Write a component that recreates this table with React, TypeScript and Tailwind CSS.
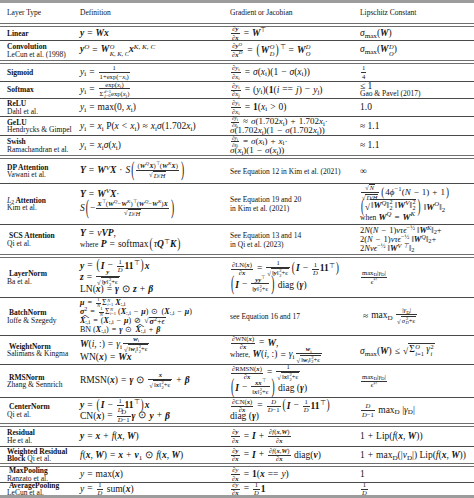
import React from "react";

type N = { children?: React.ReactNode };

// math bits
const V = ({ children }: N) => <b className="font-bold italic">{children}</b>;
const M = ({ children }: N) => <i>{children}</i>;
const Eq = ({ children = "=" }: N) => <span className="mx-[3px]">{children}</span>;

function Fr({ n, d, sm }: { n: React.ReactNode; d: React.ReactNode; sm?: boolean }) {
  return (
    <span
      className={`mx-[1px] inline-flex flex-col items-center align-middle ${
        sm ? "text-[0.58em] leading-[0.9]" : "text-[0.7em] leading-[0.95]"
      }`}
    >
      <span className="px-[1px] pb-[0.5px]">{n}</span>
      <span className="self-stretch border-t border-[#333] px-[1px] pt-[0.5px] text-center">{d}</span>
    </span>
  );
}

const Pd = ({ n, d, sm }: { n: React.ReactNode; d: React.ReactNode; sm?: boolean }) => (
  <Fr sm={sm} n={<>∂{n}</>} d={<>∂{d}</>} />
);

const SS = ({ t, b, sm }: { t: React.ReactNode; b: React.ReactNode; sm?: boolean }) => (
  <span
    className={`ml-[0.5px] inline-flex flex-col align-middle ${
      sm ? "text-[0.55em] leading-[0.85]" : "text-[0.68em] leading-[0.95]"
    }`}
  >
    <span>{t}</span>
    <span>{b}</span>
  </span>
);

const Sq = ({ children, sm }: N & { sm?: boolean }) => (
  <span className="inline-flex items-end">
    <span className="leading-none">√</span>
    <span className={`border-t border-[#333] px-[1px] ${sm ? "leading-[0.9]" : "leading-[1.05]"}`}>{children}</span>
  </span>
);

const Lp = ({ tall }: { tall?: boolean }) => (
  <span className={`mx-[1px] inline-block ${tall ? "scale-y-[2.2]" : "scale-y-[1.5]"}`}>(</span>
);
const Rp = ({ tall }: { tall?: boolean }) => (
  <span className={`mx-[1px] inline-block ${tall ? "scale-y-[2.2]" : "scale-y-[1.5]"}`}>)</span>
);

// one line of a stacked formula, fixed height, content centred (may overflow like the paper)
const Ln = ({ h = "h-[9px]", children }: { h?: string; children?: React.ReactNode }) => (
  <div className={`flex items-center ${h}`}>
    <span className="whitespace-nowrap">{children}</span>
  </div>
);

const Xi = () => (
  <>
    <V>X</V>
    <sub>:,i</sub>
  </>
);
const Hat = () => (
  <span className="relative inline-block">
    <span className="absolute -top-[3px] left-0 right-0 scale-x-[3] text-center text-[0.8em] leading-none">^</span>
    <Xi />
  </span>
);
const Norm2 = ({ v }: { v: React.ReactNode }) => (
  <>
    ‖{v}‖<SS t="2" b="2" />
  </>
);
const IMinus = () => (
  <>
    <Lp />
    <V>I</V>
    <Eq>−</Eq>
    <Fr n="1" d={<M>D</M>} />
    <b>11</b>
    <sup>⊤</sup>
    <Rp />
  </>
);
const Sup = ({ c }: { c: string }) => (
  <sup>
    <M>{c}</M>
  </sup>
);
const Wq = ({ c }: { c: string }) => (
  <>
    <V>W</V>
    <Sup c={c} />
  </>
);
const T = ({ children }: N) => <span className="text-[7.5px]">{children}</span>;

type Row = {
  name: React.ReactNode;
  by?: React.ReactNode;
  ind?: boolean;
  def: React.ReactNode;
  grad: React.ReactNode;
  lip: React.ReactNode;
  h: string;
  rule: "s" | "d" | "e";
  dc?: string;
  gc?: string;
  lc?: string;
};

const yi = (
  <>
    <M>y</M>
    <sub>i</sub>
  </>
);
const xi = (
  <>
    <M>x</M>
    <sub>i</sub>
  </>
);
const sqYe = (v: React.ReactNode) => (
  <Sq>
    <Norm2 v={v} />+<M>ϵ</M>
  </Sq>
);
const wi = (
  <>
    <V>w</V>
    <sub>i</sub>
  </>
);
const sumN = <SS sm t={<M>N</M>} b={<><M>i</M>=1</>} />;

const rows: Row[] = [
  {
    name: "Linear",
    def: (
      <>
        <V>y</V>
        <Eq />
        <V>W</V>
        <V>x</V>
      </>
    ),
    grad: (
      <>
        <Pd n={<V>y</V>} d={<V>x</V>} />
        <Eq />
        <V>W</V>
        <sup>⊤</sup>
      </>
    ),
    lip: (
      <>
        <M>σ</M>
        <sub>max</sub>(<V>W</V>)
      </>
    ),
    h: "h-[14px]",
    rule: "s",
  },
  {
    name: "Convolution",
    by: "LeCun et al. (1998)",
    def: (
      <>
        <V>y</V>
        <Sup c="O" />
        <Eq />
        <V>W</V>
        <SS t={<M>O</M>} b={<M>K, K, C</M>} />
        <V>x</V>
        <Sup c="K, K, C" />
      </>
    ),
    grad: (
      <>
        <Pd
          n={
            <>
              <V>y</V>
              <Sup c="O" />
            </>
          }
          d={
            <>
              <V>x</V>
              <Sup c="D" />
            </>
          }
        />
        <Eq />
        <Lp />
        <V>W</V>
        <SS t={<M>O</M>} b={<M>D</M>} />
        <Rp />
        <sup>⊤</sup>
        <Eq />
        <V>W</V>
        <SS t={<M>D</M>} b={<M>O</M>} />
      </>
    ),
    lip: (
      <>
        <M>σ</M>
        <sub>max</sub>(<V>W</V>
        <SS t={<M>D</M>} b={<M>O</M>} />)
      </>
    ),
    h: "h-[23px]",
    rule: "d",
  },
  {
    name: "Sigmoid",
    def: (
      <>
        {yi}
        <Eq />
        <Fr
          n="1"
          d={
            <>
              1+exp(−<M>x</M>
              <sub>i</sub>)
            </>
          }
        />
      </>
    ),
    grad: (
      <>
        <Pd n={yi} d={xi} />
        <Eq />
        <M>σ</M>({xi})(1<Eq>−</Eq>
        <M>σ</M>({xi}))
      </>
    ),
    lip: <Fr n="1" d="4" />,
    h: "h-[18px]",
    rule: "s",
  },
  {
    name: "Softmax",
    def: (
      <>
        {yi}
        <Eq />
        <Fr
          n={<>exp({xi})</>}
          d={
            <>
              Σ<SS t={<><M>d</M>−1</>} b={<><M>j</M>=0</>} />
              exp(<M>x</M>
              <sub>j</sub>)
            </>
          }
        />
      </>
    ),
    grad: (
      <>
        <Pd
          n={yi}
          d={
            <>
              <M>x</M>
              <sub>j</sub>
            </>
          }
        />
        <Eq />({yi})(<b>1</b>(<M>i</M>
        <Eq>==</Eq>
        <M>j</M>)<Eq>−</Eq>
        <M>y</M>
        <sub>j</sub>)
      </>
    ),
    lip: (
      <div className="flex flex-col leading-[8px]">
        <span>≤ 1</span>
        <T>Gao &amp; Pavel (2017)</T>
      </div>
    ),
    h: "h-[17px]",
    rule: "s",
  },
  {
    name: "ReLU",
    by: "Dahl et al.",
    def: (
      <>
        {yi}
        <Eq />
        max(0, {xi})
      </>
    ),
    grad: (
      <>
        <Pd n={yi} d={xi} />
        <Eq />
        <b>1</b>({xi}
        <Eq>&gt;</Eq>0)
      </>
    ),
    lip: "1.0",
    h: "h-[18px]",
    rule: "s",
  },
  {
    name: "GeLU",
    by: "Hendrycks & Gimpel",
    def: (
      <>
        {yi}
        <Eq />
        {xi} P(<M>x</M>
        <Eq>&lt;</Eq>
        {xi})<Eq>≈</Eq>
        {xi}
        <M>σ</M>(1.702{xi})
      </>
    ),
    grad: (
      <div>
        <Ln h="h-[10px]">
          <Pd sm n={yi} d={xi} />
          <Eq>≈</Eq>
          <M>σ</M>(1.702{xi})<Eq>+</Eq>1.702{xi}·
        </Ln>
        <Ln h="h-[8px]">
          <M>σ</M>(1.702{xi})(1<Eq>−</Eq>
          <M>σ</M>(1.702{xi}))
        </Ln>
      </div>
    ),
    gc: "text-[9px]",
    lip: "≈ 1.1",
    h: "h-[19px]",
    rule: "s",
  },
  {
    name: "Swish",
    by: "Ramachandran et al.",
    def: (
      <>
        {yi}
        <Eq />
        {xi}
        <M>σ</M>({xi})
      </>
    ),
    grad: (
      <div>
        <Ln h="h-[11px]">
          <Pd sm n={yi} d={xi} />
          <Eq />
          <M>σ</M>({xi})<Eq>+</Eq>
          {xi}·
        </Ln>
        <Ln h="h-[8px]">
          <M>σ</M>({xi})(1<Eq>−</Eq>
          <M>σ</M>({xi}))
        </Ln>
      </div>
    ),
    gc: "text-[9px]",
    lip: "≈ 1.1",
    h: "h-[23px]",
    rule: "d",
  },
  {
    name: "DP Attention",
    by: "Vawani et al.",
    def: (
      <>
        <V>Y</V>
        <Eq />
        <Wq c="V" />
        <V>X</V>
        <Eq>·</Eq>
        <M>S</M>
        <Lp tall />
        <Fr
          n={
            <>
              (<Wq c="Q" />
              <V>X</V>)<sup>⊤</sup>(<Wq c="K" />
              <V>X</V>)
            </>
          }
          d={
            <Sq>
              <M>D</M>/<M>H</M>
            </Sq>
          }
        />
        <Rp tall />
      </>
    ),
    grad: <T>See Equation 12 in Kim et al. (2021)</T>,
    lip: "∞",
    h: "h-[25px]",
    rule: "s",
  },
  {
    name: (
      <>
        <i className="font-normal">L</i>
        <sub className="font-normal">2</sub> Attention
      </>
    ),
    by: "Kim et al.",
    def: (
      <div>
        <Ln h="h-[10px]">
          <V>Y</V>
          <Eq />
          <Wq c="V" />
          <V>X</V>·
        </Ln>
        <Ln h="h-[20px]">
          <M>S</M>
          <Lp tall />−
          <Fr
            n={
              <>
                <V>X</V>
                <sup>⊤</sup>(<Wq c="Q" />−<Wq c="K" />)<sup>⊤</sup>(<Wq c="Q" />−<Wq c="K" />)<V>X</V>
              </>
            }
            d={
              <Sq>
                <M>D</M>/<M>H</M>
              </Sq>
            }
          />
          <Rp tall />
        </Ln>
      </div>
    ),
    grad: (
      <div className="flex flex-col leading-[9px]">
        <T>See Equation 19 and 20</T>
        <T>in Kim et al. (2021)</T>
      </div>
    ),
    lip: (
      <div>
        <Ln h="h-[13px]">
          <Fr
            n={
              <Sq>
                <M>N</M>
              </Sq>
            }
            d={
              <Sq>
                <M>D</M>/<M>H</M>
              </Sq>
            }
          />
          <Lp />4<M>ϕ</M>
          <sup>−1</sup>(<M>N</M>
          <Eq>−</Eq>1)<Eq>+</Eq>1<Rp />
        </Ln>
        <Ln h="h-[14px]">
          <Lp tall />
          <Sq>
            <Norm2 v={<Wq c="Q" />} /> <Norm2 v={<Wq c="V" />} />
          </Sq>
          <Rp tall /> ‖<Wq c="O" />‖<sub>2</sub>
        </Ln>
        <Ln>
          <T>when</T> <Wq c="Q" />
          <Eq />
          <Wq c="K" />
        </Ln>
      </div>
    ),
    lc: "text-[9px]",
    h: "h-[41px]",
    rule: "s",
  },
  {
    name: "SCS Attention",
    by: "Qi et al.",
    ind: true,
    def: (
      <div>
        <Ln h="h-[10px]">
          <V>Y</V>
          <Eq />
          <M>ν</M>
          <V>V</V>
          <V>P</V>,
        </Ln>
        <Ln h="h-[13px]">
          <T>where</T> <V>P</V>
          <Eq />
          softmax
          <Lp />
          <M>τ</M>
          <V>Q</V>
          <sup>⊤</sup>
          <V>K</V>
          <Rp />
        </Ln>
      </div>
    ),
    grad: (
      <div className="flex flex-col leading-[9px]">
        <T>See Equation 13 and 14</T>
        <T>in Qi et al. (2023)</T>
      </div>
    ),
    lip: (
      <div>
        <Ln>
          2<M>N</M>(<M>N</M>
          <Eq>−</Eq>1)<M>ντϵ</M>
          <sup>−½</sup> ‖<Wq c="K" />‖<sub>2</sub>+
        </Ln>
        <Ln>
          2(<M>N</M>
          <Eq>−</Eq>1)<M>ντϵ</M>
          <sup>−½</sup> ‖<Wq c="Q" />‖<sub>2</sub>+
        </Ln>
        <Ln>
          2<M>Nνϵ</M>
          <sup>−½</sup> ‖<Wq c="V ⊤" />‖<sub>2</sub>
        </Ln>
      </div>
    ),
    lc: "text-[8.5px]",
    h: "h-[33px]",
    rule: "d",
  },
  {
    name: "LayerNorm",
    by: "Ba et al.",
    ind: true,
    def: (
      <div>
        <Ln h="h-[11px]">
          <V>y</V>
          <Eq />
          <IMinus />
          <V>x</V>
        </Ln>
        <Ln h="h-[13px]">
          <V>z</V>
          <Eq />
          <Fr n={<V>y</V>} d={sqYe(<V>y</V>)} />
        </Ln>
        <Ln h="h-[10px]">
          LN(<V>x</V>)<Eq />
          <V>γ</V>
          <Eq>⊙</Eq>
          <V>z</V>
          <Eq>+</Eq>
          <V>β</V>
        </Ln>
      </div>
    ),
    grad: (
      <div>
        <Ln h="h-[15px]">
          <Fr n={<>∂LN(<V>x</V>)</>} d={<>∂<V>x</V></>} />
          <Eq />
          <Fr n="1" d={sqYe(<V>y</V>)} />
          <IMinus />
        </Ln>
        <Ln h="h-[17px]">
          <Lp tall />
          <V>I</V>
          <Eq>−</Eq>
          <Fr
            n={
              <>
                <V>yy</V>
                <sup>⊤</sup>
              </>
            }
            d={
              <>
                <Norm2 v={<V>y</V>} />+<M>ϵ</M>
              </>
            }
          />
          <Rp tall /> diag (<V>γ</V>)
        </Ln>
      </div>
    ),
    lip: (
      <Fr
        n={
          <>
            max<sub>D</sub>|<M>γ</M>
            <sub>D</sub>|
          </>
        }
        d={
          <>
            <M>ϵ</M>
            <sup>½</sup>
          </>
        }
      />
    ),
    h: "h-[40px]",
    rule: "s",
  },
  {
    name: "BatchNorm",
    by: "Ioffe & Szegedy",
    ind: true,
    def: (
      <div>
        <Ln>
          <V>μ</V>
          <Eq />
          <Fr sm n="1" d={<M>N</M>} />Σ{sumN} <Xi />
        </Ln>
        <Ln>
          <V>σ</V>
          <sup>2</sup>
          <Eq />
          <Fr sm n="1" d={<M>N</M>} />Σ{sumN} (<Xi />
          <Eq>−</Eq>
          <V>μ</V>)<Eq>⊙</Eq>(<Xi />
          <Eq>−</Eq>
          <V>μ</V>)
        </Ln>
        <Ln>
          <Hat />
          <Eq />(<Xi />
          <Eq>−</Eq>
          <V>μ</V>)<Eq>⊘</Eq>
          <Sq sm>
            <V>σ</V>
            <sup>2</sup>+<M>ϵ</M>
          </Sq>
        </Ln>
        <Ln>
          BN (<Xi />)<Eq />
          <V>γ</V>
          <Eq>⊙</Eq>
          <Hat />
          <Eq>+</Eq>
          <V>β</V>
        </Ln>
      </div>
    ),
    dc: "text-[8px]",
    grad: <T>see Equation 16 and 17</T>,
    lip: (
      <>
        <Eq>≈</Eq>max<sub>D</sub>{" "}
        <Fr
          n={
            <>
              |<M>γ</M>
              <sub>D</sub>|
            </>
          }
          d={
            <Sq>
              <M>σ</M>
              <SS t="2" b={<M>D</M>} />+<M>ϵ</M>
            </Sq>
          }
        />
      </>
    ),
    h: "h-[38px]",
    rule: "s",
  },
  {
    name: "WeightNorm",
    by: "Salimans & Kingma",
    ind: true,
    def: (
      <div>
        <Ln h="h-[14px]">
          <V>W</V>(<M>i</M>, :)<Eq />
          <M>γ</M>
          <sub>i</sub>
          <Fr n={wi} d={sqYe(wi)} />
        </Ln>
        <Ln h="h-[10px]">
          WN(<V>x</V>)<Eq />
          <V>W</V>
          <V>x</V>
        </Ln>
      </div>
    ),
    grad: (
      <div>
        <Ln h="h-[11px]">
          <Fr n={<>∂WN(<V>x</V>)</>} d={<>∂<V>x</V></>} />
          <Eq />
          <V>W</V>,
        </Ln>
        <Ln h="h-[14px]">
          <T>where,</T> <V>W</V>(<M>i</M>, :)<Eq />
          <M>γ</M>
          <sub>i</sub>
          <Fr n={wi} d={sqYe(wi)} />
        </Ln>
      </div>
    ),
    lip: (
      <>
        <M>σ</M>
        <sub>max</sub>(<V>W</V>)<Eq>≤</Eq>
        <Sq>
          Σ<SS t={<M>O</M>} b={<><M>i</M>=1</>} /> <M>γ</M>
          <SS t="2" b={<M>i</M>} />
        </Sq>
      </>
    ),
    h: "h-[29px]",
    rule: "s",
  },
  {
    name: "RMSNorm",
    by: "Zhang & Sennrich",
    ind: true,
    def: (
      <>
        RMSN(<V>x</V>)<Eq />
        <V>γ</V>
        <Eq>⊙</Eq>
        <Fr n={<V>x</V>} d={sqYe(<V>x</V>)} />
        <Eq>+</Eq>
        <V>β</V>
      </>
    ),
    grad: (
      <div>
        <Ln h="h-[14px]">
          <Fr n={<>∂RMSN(<V>x</V>)</>} d={<>∂<V>x</V></>} />
          <Eq />
          <Fr n="1" d={sqYe(<V>x</V>)} />
        </Ln>
        <Ln h="h-[16px]">
          <Lp tall />
          <V>I</V>
          <Eq>−</Eq>
          <Fr
            n={
              <>
                <V>xx</V>
                <sup>⊤</sup>
              </>
            }
            d={
              <>
                <Norm2 v={<V>x</V>} />+<M>ϵ</M>
              </>
            }
          />
          <Rp tall /> diag (<V>γ</V>)
        </Ln>
      </div>
    ),
    lip: (
      <Fr
        n={
          <>
            max<sub>D</sub>|<M>γ</M>
            <sub>D</sub>|
          </>
        }
        d={
          <>
            <M>ϵ</M>
            <sup>½</sup>
          </>
        }
      />
    ),
    h: "h-[33px]",
    rule: "s",
  },
  {
    name: "CenterNorm",
    by: "Qi et al.",
    ind: true,
    def: (
      <div>
        <Ln h="h-[11px]">
          <V>y</V>
          <Eq />
          <IMinus />
          <V>x</V>
        </Ln>
        <Ln h="h-[10px]">
          CN(<V>x</V>)<Eq />
          <Fr n={<M>D</M>} d={<><M>D</M>−1</>} />
          <V>γ</V>
          <Eq>⊙</Eq>
          <V>y</V>
          <Eq>+</Eq>
          <V>β</V>
        </Ln>
      </div>
    ),
    grad: (
      <div>
        <Ln h="h-[12px]">
          <Fr n={<>∂CN(<V>x</V>)</>} d={<>∂<V>x</V></>} />
          <Eq />
          <Fr n={<M>D</M>} d={<><M>D</M>−1</>} />
          <IMinus />
        </Ln>
        <Ln h="h-[9px]">
          diag (<V>γ</V>)
        </Ln>
      </div>
    ),
    lip: (
      <>
        <Fr n={<M>D</M>} d={<><M>D</M>−1</>} /> max<sub>D</sub> |<M>γ</M>
        <sub>D</sub>|
      </>
    ),
    h: "h-[29px]",
    rule: "d",
  },
  {
    name: "Residual",
    by: "He et al.",
    def: (
      <>
        <V>y</V>
        <Eq />
        <V>x</V>
        <Eq>+</Eq>
        <M>f</M>(<V>x</V>, <V>W</V>)
      </>
    ),
    grad: (
      <>
        <Pd n={<V>y</V>} d={<V>x</V>} />
        <Eq />
        <V>I</V>
        <Eq>+</Eq>
        <Fr n={<>∂<M>f</M>(<V>x</V>,<V>W</V>)</>} d={<>∂<V>x</V></>} />
      </>
    ),
    lip: (
      <>
        1<Eq>+</Eq>Lip(<M>f</M>(<V>x</V>, <V>W</V>))
      </>
    ),
    h: "h-[20px]",
    rule: "s",
  },
  {
    name: "Weighted Residual",
    by: (
      <>
        <b>Block</b> Qi et al.
      </>
    ),
    def: (
      <>
        <M>f</M>(<V>x</V>, <V>W</V>)<Eq />
        <V>x</V>
        <Eq>+</Eq>
        <V>ν</V>
        <sub>1</sub>
        <Eq>⊙</Eq>
        <M>f</M>(<V>x</V>, <V>W</V>)
      </>
    ),
    grad: (
      <>
        <Pd n={<V>y</V>} d={<V>x</V>} />
        <Eq />
        <V>I</V>
        <Eq>+</Eq>
        <Fr n={<>∂<M>f</M>(<V>x</V>,<V>W</V>)</>} d={<>∂<V>x</V></>} /> diag(<V>ν</V>)
      </>
    ),
    lip: (
      <>
        1<Eq>+</Eq>max<sub>D</sub>(|<M>ν</M>
        <sub>D</sub>|) Lip(<M>f</M>(<V>x</V>, <V>W</V>))
      </>
    ),
    h: "h-[20px]",
    rule: "d",
  },
  {
    name: "MaxPooling",
    by: "Ranzato et al.",
    ind: true,
    def: (
      <>
        <M>y</M>
        <Eq />
        max(<V>x</V>)
      </>
    ),
    grad: (
      <>
        <Pd n={<M>y</M>} d={<V>x</V>} />
        <Eq />
        <b>1</b>(<V>x</V>
        <Eq>==</Eq>
        <M>y</M>)
      </>
    ),
    lip: "1",
    h: "h-[16px]",
    rule: "s",
  },
  {
    name: "AveragePooling",
    by: "LeCun et al.",
    ind: true,
    def: (
      <>
        <M>y</M>
        <Eq />
        <Fr n="1" d={<M>D</M>} /> sum(<V>x</V>)
      </>
    ),
    grad: (
      <>
        <Pd n={<M>y</M>} d={<V>x</V>} />
        <Eq />
        <Fr n="1" d={<M>D</M>} />
        <b>1</b>
      </>
    ),
    lip: <Fr n="1" d={<M>D</M>} />,
    h: "h-[12px]",
    rule: "e",
  },
];

const ruleCls = {
  s: "border-b border-[#4a4a4a]",
  d: "border-b-4 border-double border-[#6f6f6f]",
  e: "",
};

const cols = "grid grid-cols-[80px_150px_128px_116px] grid-rows-[minmax(0,1fr)] items-center";

export default function App() {
  return (
    <div className="h-[498px] w-[474px] overflow-hidden bg-white font-['Liberation_Serif',serif] text-[7.5px] text-[#111]">
      <div className="h-[3px] bg-[#9c9c9c]" />
      <div className={`${cols} h-[24px] border-b-4 border-double border-[#6f6f6f]`}>
        <div className="pl-[7px]">Layer Type</div>
        <div>Definition</div>
        <div>Gradient or Jacobian</div>
        <div className="pl-[2px]">Lipschitz Constant</div>
      </div>
      {rows.map((r, i) => (
        <div key={i} className={`${cols} ${r.h} ${ruleCls[r.rule]}`}>
          <div className="flex flex-col pl-[7px] leading-[7.5px]">
            <b className={r.ind ? "pl-[2px]" : ""}>{r.name}</b>
            {r.by && <span>{r.by}</span>}
          </div>
          <div className={`whitespace-nowrap leading-[1.1] ${r.dc ?? "text-[9.5px]"}`}>{r.def}</div>
          <div className={`whitespace-nowrap leading-[1.1] ${r.gc ?? "text-[9.5px]"}`}>{r.grad}</div>
          <div className={`whitespace-nowrap pl-[2px] leading-[1.1] ${r.lc ?? "text-[9.5px]"}`}>{r.lip}</div>
        </div>
      ))}
      <div className="h-[3px] bg-[#9c9c9c]" />
    </div>
  );
}
